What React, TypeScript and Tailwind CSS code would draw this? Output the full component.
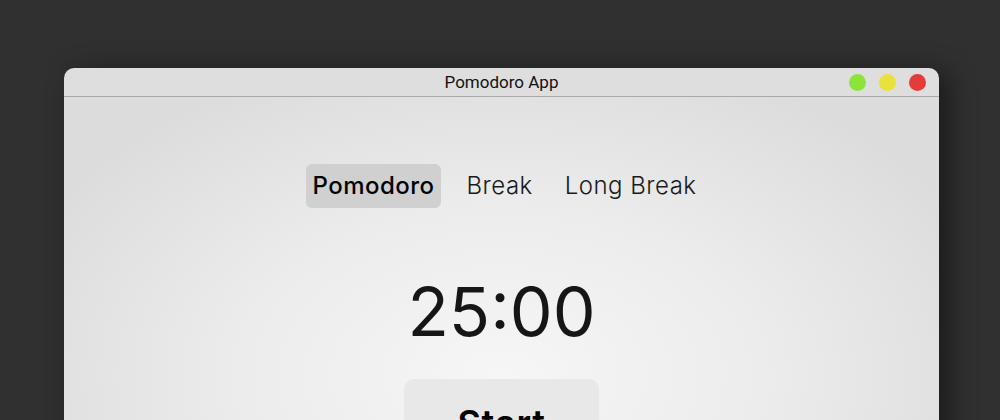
import React from "react";

export default function App() {
  return (
    <div className="h-[420px] w-[1000px] overflow-hidden bg-[#303030] pt-[68px] pl-[64px]">
      <div className="w-[875px] h-[400px] rounded-t-[10px] overflow-hidden shadow-[10px_4px_28px_rgba(0,0,0,0.45)] flex flex-col">
        <div className="relative h-[29px] shrink-0 bg-[#dedede] border-b border-[#a9a9a9] flex items-center justify-center">
          <span className="text-[17px] text-[#111] font-['Roboto',sans-serif] leading-none">Pomodoro App</span>
          <div className="absolute right-[13px] top-[6px] flex gap-[13px]">
            <span className="w-[17px] h-[17px] rounded-full bg-[#8ee23c]" />
            <span className="w-[17px] h-[17px] rounded-full bg-[#e9e23b]" />
            <span className="w-[17px] h-[17px] rounded-full bg-[#e23c3c]" />
          </div>
        </div>
        <div className="flex-1 flex flex-col items-center bg-[radial-gradient(ellipse_60%_90%_at_50%_75%,#f6f6f6_0%,#ececec_50%,#dcdcdc_100%)] font-['Inter',sans-serif] text-[#1a1a1a]">
          <div className="mt-[67px] flex items-center text-[24px] tracking-[0.02em]">
            <div className="h-[44px] px-[6px] rounded-[6px] bg-[#d0d0d0] flex items-center font-medium text-black">Pomodoro</div>
            <div className="h-[44px] ml-[26px] flex items-center font-light">Break</div>
            <div className="h-[44px] ml-[32px] flex items-center font-light">Long Break</div>
          </div>
          <div className="mt-[69px] text-[68px] leading-none font-normal text-[#161616]">25:00</div>
          <div className="mt-[34px] w-[195px] h-[80px] rounded-[10px] bg-[#e8e8e8] flex justify-center pt-[26px]">
            <span className="text-[36px] font-semibold leading-none tracking-[0.02em] text-black">Start</span>
          </div>
        </div>
      </div>
    </div>
  );
}
